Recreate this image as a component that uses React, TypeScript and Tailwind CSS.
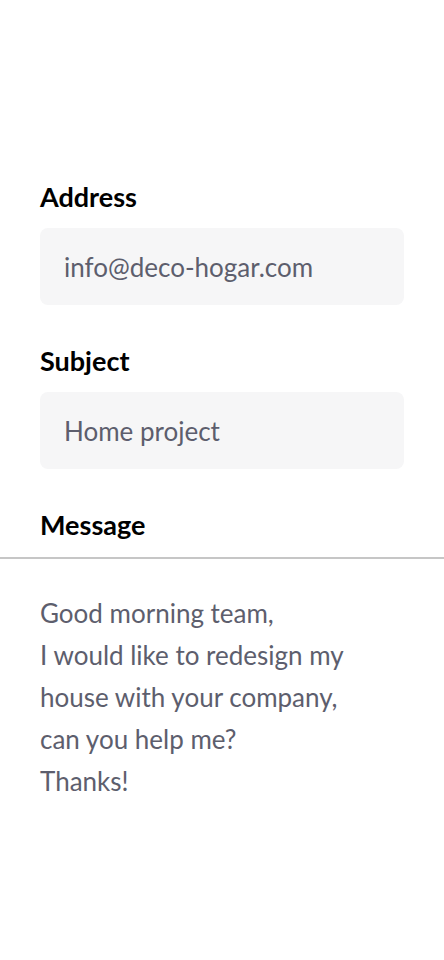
import React from 'react';

const Field: React.FC<{ label: string; value: string }> = ({ label, value }) => (
  <div className="flex flex-col">
    <label className="text-[27px] font-bold leading-[36px] text-black">{label}</label>
    <div className="mt-[13px] h-[77px] rounded-[8px] bg-[#f6f6f7] px-6 flex items-center">
      <span className="text-[26px] leading-none text-[#5d5e6d]">{value}</span>
    </div>
  </div>
);

const App: React.FC = () => {
  return (
    <div className="min-h-screen bg-white font-['Lato','Liberation_Sans',sans-serif]">
      <div className="px-10 pt-[179px] flex flex-col gap-[38px]">
        <Field label="Address" value="info@deco-hogar.com" />
        <Field label="Subject" value="Home project" />
      </div>
      <div className="px-10 mt-[38px]">
        <label className="text-[27px] font-bold leading-[36px] text-black">Message</label>
      </div>
      <div className="mt-[14px] h-[2px] bg-[#c6c6c6]" />
      <div className="px-10 pt-[33px] text-[26px] leading-[42px] text-[#5d5e6d]">
        <p>Good morning team,</p>
        <p>I would like to redesign my</p>
        <p>house with your company,</p>
        <p>can you help me?</p>
        <p>Thanks!</p>
      </div>
    </div>
  );
};

export default App;
